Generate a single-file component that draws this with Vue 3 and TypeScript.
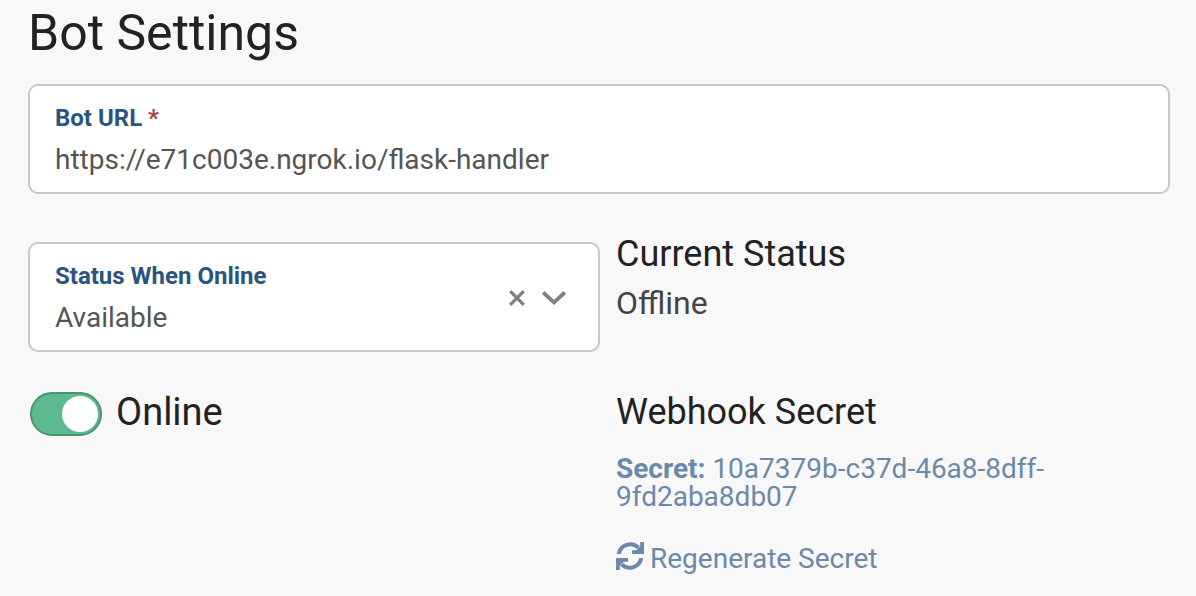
<script setup lang="ts">
import { ref } from 'vue'

const botUrl = ref<string>('https://e71c003e.ngrok.io/flask-handler')
const statusWhenOnline = ref<string>('Available')
const statuses: string[] = ['Available', 'Busy', 'Away']
const online = ref<boolean>(true)
const currentStatus = ref<string>('Offline')
const secret = ref<string>('10a7379b-c37d-46a8-8dff-9fd2aba8db07')

function clearStatus(): void {
  statusWhenOnline.value = ''
}

function regenerateSecret(): void {
  secret.value = crypto.randomUUID()
}
</script>

<template>
  <main class="page">
    <h1 class="title">Bot Settings</h1>

    <div class="field">
      <div class="field-body">
        <label class="label" for="bot-url">Bot URL <span class="required">*</span></label>
        <input id="bot-url" v-model="botUrl" class="control" type="text" required spellcheck="false" />
      </div>
    </div>

    <div class="grid">
      <div class="cell">
        <div class="field">
          <div class="field-body">
            <label class="label" for="status">Status When Online</label>
            <select id="status" v-model="statusWhenOnline" class="control">
              <option v-for="s in statuses" :key="s" :value="s">{{ s }}</option>
            </select>
          </div>
          <button class="clear" type="button" aria-label="Clear status" @click="clearStatus">
            <svg width="16" height="16" viewBox="0 0 16 16" aria-hidden="true">
              <path d="M1.2 1.2 14.8 14.8M14.8 1.2 1.2 14.8" fill="none" stroke="#808080" stroke-width="3.2" />
            </svg>
          </button>
          <svg class="chevron" width="24" height="14" viewBox="0 0 24 14" aria-hidden="true">
            <path d="M1.2 1.4 12 11.4 22.8 1.4" fill="none" stroke="#808080" stroke-width="3.8" />
          </svg>
        </div>
      </div>

      <section class="cell side">
        <h2 class="heading">Current Status</h2>
        <p class="status">{{ currentStatus }}</p>
      </section>

      <div class="cell">
        <label class="toggle">
          <input v-model="online" class="switch" type="checkbox" role="switch" />
          <span>Online</span>
        </label>
      </div>

      <section class="cell side">
        <h2 class="heading">Webhook Secret</h2>
        <p class="secret"><strong>Secret:</strong> {{ secret }}</p>
        <button class="regenerate" type="button" @click="regenerateSecret">
          <svg width="28" height="28" viewBox="0 0 28 28" aria-hidden="true">
            <g id="refresh-half" fill="currentColor">
              <path d="M.8 12A13.6 13.6 0 0 1 23.8 4.2L21 7A9.7 9.7 0 0 0 4.8 12Z" />
              <path d="M24.2 0H28V12H16V8.2H20.2L24.2 4.2Z" />
            </g>
            <use href="#refresh-half" transform="rotate(180 14 14)" />
          </svg>
          <span>Regenerate Secret</span>
        </button>
      </section>
    </div>
  </main>
</template>

<style>
html,
body {
  background: #f8f8f8;
}
</style>

<style scoped>
.page {
  box-sizing: border-box;
  padding: 3px 26px 20px 28px;
  font-family: Roboto, "Liberation Sans", sans-serif;
  font-size: 28px;
  color: #222;
}

.title,
.heading,
.status,
.secret {
  margin: 0;
  font-weight: 400;
}

.title {
  margin-bottom: 21px;
  font-size: 50px;
  line-height: 60px;
}

.field {
  display: flex;
  align-items: center;
  box-sizing: border-box;
  padding: 16px 32px 14px 25px;
  border: 2px solid #c8c8c8;
  border-radius: 10px;
  background: #fff;
}

.field-body {
  display: flex;
  flex: 1;
  flex-direction: column;
  gap: 8px;
  min-width: 0;
}

.label {
  font-size: 24px;
  font-weight: 700;
  line-height: 32px;
  color: #2b547e;
}

.required {
  color: #a94442;
}

.control {
  width: 100%;
  height: 36px;
  margin: 0;
  padding: 0;
  border: 0;
  outline: 0;
  appearance: none;
  background: transparent;
  color: #555;
  font: inherit;
  line-height: 36px;
}

.clear {
  display: flex;
  margin: 0 17px 0 8px;
  padding: 0;
  border: 0;
  background: none;
  cursor: pointer;
}

.chevron {
  flex: none;
}

.grid {
  display: grid;
  grid-template-columns: 1fr 1fr;
  row-gap: 40px;
  margin: 48px -2px 0 0;
}

.side {
  padding-left: 16px;
}

.heading {
  font-size: 36px;
  line-height: 40px;
}

.cell:nth-child(2) {
  margin-top: -8px;
}

.status {
  margin-top: 9px;
  font-size: 32px;
  line-height: 40px;
  color: #444;
}

.toggle {
  display: flex;
  align-items: flex-start;
  gap: 14px;
  padding-left: 2px;
  font-size: 38px;
  line-height: 40px;
}

.switch {
  display: flex;
  align-items: center;
  box-sizing: border-box;
  width: 72px;
  height: 44px;
  margin: 0;
  padding: 0 2px;
  border: 2px solid #4a9470;
  border-radius: 22px;
  appearance: none;
  background: #5dba8e;
}

.switch::before {
  width: 36px;
  height: 36px;
  border-radius: 50%;
  background: #fff;
  content: "";
}

.switch:checked {
  justify-content: flex-end;
}

.switch:not(:checked) {
  border-color: #aaa;
  background: #ccc;
}

.secret {
  margin-top: 23px;
  line-height: 28px;
  color: #6b89ab;
}

.regenerate {
  display: flex;
  align-items: flex-start;
  gap: 6px;
  margin-top: 31px;
  padding: 0;
  border: 0;
  background: none;
  color: #6b89ab;
  font: inherit;
  line-height: 34px;
  cursor: pointer;
}
</style>
